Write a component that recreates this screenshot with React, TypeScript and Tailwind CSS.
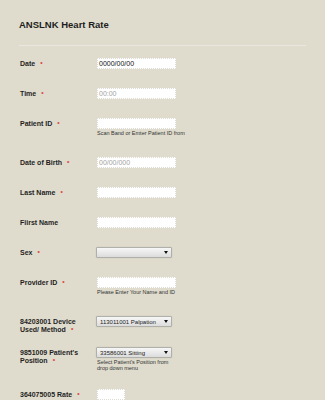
import React from "react";

const font = { fontFamily: '"Liberation Sans", Arial, sans-serif' };

function Star() {
  return <span className="text-[#e02020] text-[6px] ml-[5px] align-top">*</span>;
}

function Label({ lines, required }: { lines: string[]; required?: boolean }) {
  return (
    <div className="w-[77px] shrink-0 pt-[2px] text-[7px] leading-[8px] font-bold text-[#1f1f1f]">
      {lines.map((l, i) => (
        <div key={i} className="whitespace-nowrap">
          {l}
          {required && i === lines.length - 1 ? <Star /> : null}
        </div>
      ))}
    </div>
  );
}

function TextInput({ value, placeholder, w = "w-[79px]" }: { value?: string; placeholder?: string; w?: string }) {
  return (
    <div
      className={`${w} h-[11px] bg-white border border-dotted border-[#dedcd4] flex items-center pl-[1px] text-[7px] leading-[7px]`}
    >
      {value ? <span className="text-[#111]">{value}</span> : <span className="text-[#a3a3a3]">{placeholder}</span>}
    </div>
  );
}

function Select({ value }: { value?: string }) {
  return (
    <div className="w-[76px] h-[11px] -ml-px border border-[#b0b0aa] rounded-[1px] bg-gradient-to-b from-[#f7f7f7] to-[#dcdcdc] flex items-center justify-between pl-[3px] pr-[3px] text-[6px] leading-[6px] text-[#222] shadow-[0_0_1px_rgba(0,0,0,0.2)]">
      <span>{value ?? ""}</span>
      <svg width="4" height="3" viewBox="0 0 4 3">
        <polygon points="0,0 4,0 2,3" fill="#111" />
      </svg>
    </div>
  );
}

function Helper({ lines }: { lines: string[] }) {
  return (
    <div className="mt-[1px] pb-[2px] text-[5.5px] leading-[6px] text-[#333]">
      {lines.map((l, i) => (
        <div key={i} className="whitespace-nowrap">
          {l}
        </div>
      ))}
    </div>
  );
}

function Row({
  children,
  label,
  required,
  mb = "mb-[19px]",
}: {
  children: React.ReactNode;
  label: string[];
  required?: boolean;
  mb?: string;
}) {
  return (
    <div className={`flex ${mb}`}>
      <Label lines={label} required={required} />
      <div className="flex flex-col">{children}</div>
    </div>
  );
}

export default function App() {
  return (
    <div className="w-full min-h-[400px] bg-[#dfdccd] px-[19px] overflow-hidden" style={font}>
      <div className="pt-[20px] text-[9.5px] leading-[10px] font-bold text-[#1e1e1e]">ANSLNK Heart Rate</div>
      <div className="mt-[15px] border-t border-[#e9e7de] w-[287px]" />
      <div className="mt-[12px] pl-[1px]">
        <Row label={["Date"]} required>
          <TextInput value="0000/00/00" />
        </Row>
        <Row label={["Time"]} required>
          <TextInput placeholder="00:00" />
        </Row>
        <Row label={["Patient ID"]} required>
          <TextInput />
          <Helper lines={["Scan Band or Emter Patient ID from"]} />
        </Row>
        <Row label={["Date of Birth"]} required>
          <TextInput placeholder="00/00/000" />
        </Row>
        <Row label={["Last Name"]} required>
          <TextInput />
        </Row>
        <Row label={["Fiirst Name"]}>
          <TextInput />
        </Row>
        <Row label={["Sex"]} required>
          <Select />
        </Row>
        <Row label={["Provider ID"]} required>
          <TextInput />
          <Helper lines={["Please Enter Your Name and ID"]} />
        </Row>
        <Row label={["84203001 Device", "Used/ Method"]} required mb="mb-[13px]">
          <Select value="113011001 Palpation" />
        </Row>
        <Row label={["9851009 Patient's", "Position"]} required mb="mb-[16px]">
          <Select value="33586001 Sitting" />
          <Helper lines={["Select Patient's Position from", "drop down menu"]} />
        </Row>
        <Row label={["364075005 Rate"]} required>
          <TextInput w="w-[28px]" />
        </Row>
      </div>
    </div>
  );
}
